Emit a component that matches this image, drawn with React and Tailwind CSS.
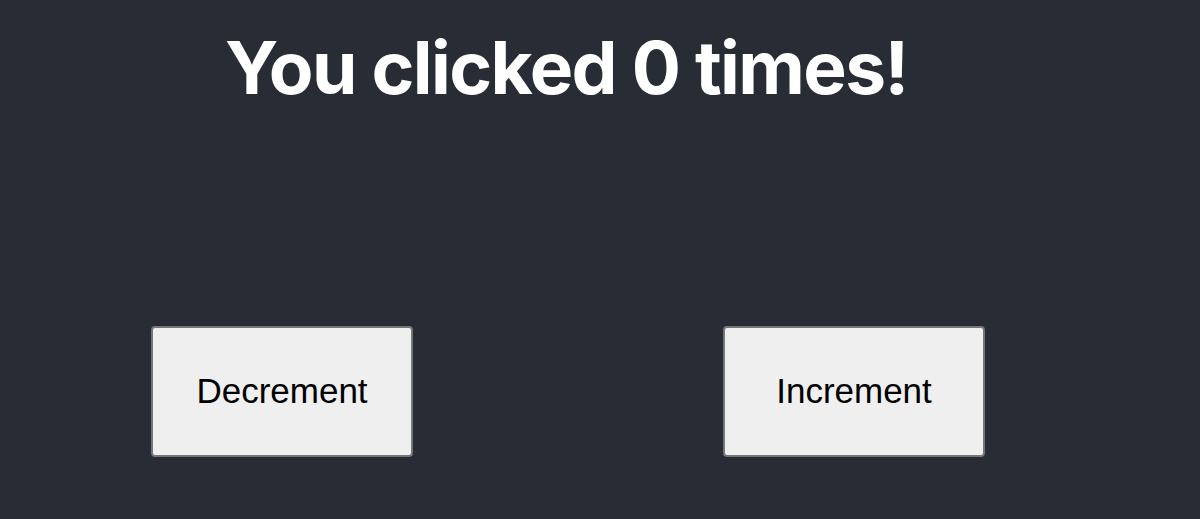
export default function App() {
  return (
    <div className="min-h-[519px] w-[1200px] bg-[#282c34] flex flex-col">
      <h1 className="ml-[225px] mt-[26px] text-[73px] leading-[84px] font-bold text-white tracking-[-1.6px] font-['Inter',sans-serif]">
        You clicked 0 times!
      </h1>
      <div className="flex mt-[216px] pl-[151px] gap-[310px]">
        <button className="w-[262px] h-[131px] bg-[#efefef] border-2 border-[#767676] rounded-[4px] text-black text-[35px] font-['Liberation_Sans',Arial,sans-serif]">
          Decrement
        </button>
        <button className="w-[262px] h-[131px] bg-[#efefef] border-2 border-[#767676] rounded-[4px] text-black text-[35px] font-['Liberation_Sans',Arial,sans-serif]">
          Increment
        </button>
      </div>
    </div>
  );
}
